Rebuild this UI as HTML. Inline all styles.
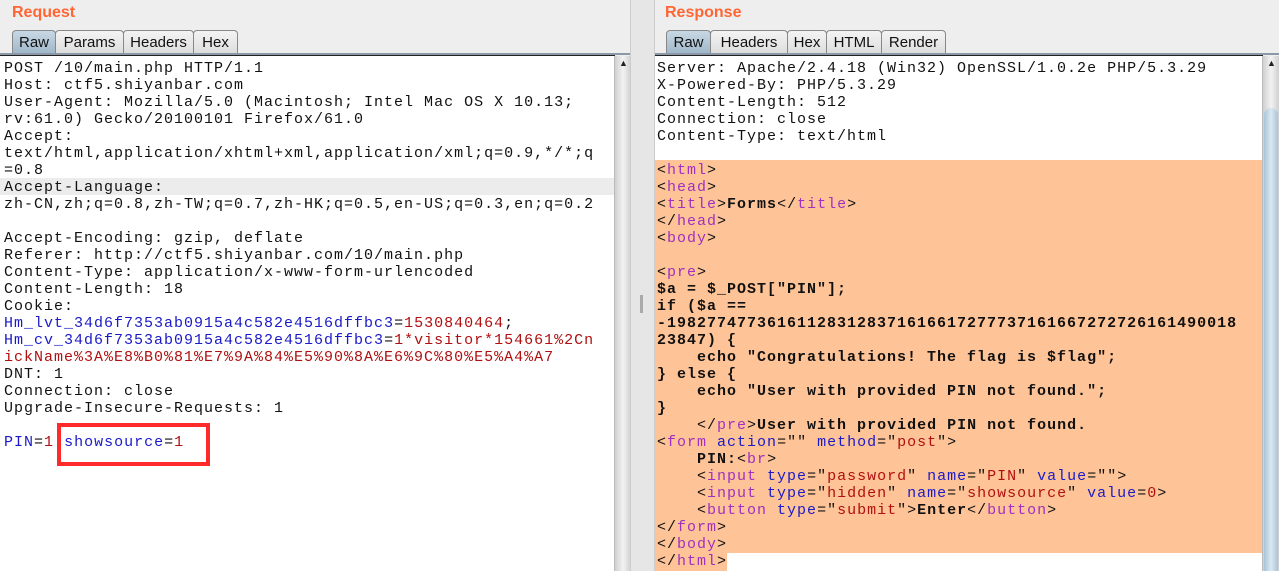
<!DOCTYPE html>
<html><head><meta charset="utf-8"><style>
*{margin:0;padding:0;box-sizing:border-box}
body{width:1279px;height:571px;background:#eeeeee;position:relative;overflow:hidden;font-family:"Liberation Sans",sans-serif}
.title{position:absolute;top:4px;font-size:16px;font-weight:bold;color:#ff6633}
.tabs{position:absolute;top:30px;height:24px;display:flex}
.tab{height:24px;border:1px solid #888;border-bottom:none;border-radius:4px 4px 0 0;background:linear-gradient(#f4f4f4,#dcdcdc);font-size:15px;padding:3px 0 0;text-align:center;color:#111;margin-right:-1px}
.tab.sel{background:linear-gradient(#c8d8e4,#9fb6c8)}
.line{position:absolute;top:53px;height:2px;background:#8a98a8}
.area{position:absolute;top:55px;height:516px;background:#fff;border-top:1px solid #222}
.sb{position:absolute;top:56px;width:17px;height:515px;background:linear-gradient(90deg,#d0d0d0,#f2f2f2,#d0d0d0);border-left:1px solid #bbb}
.sb:before{content:"▲";position:absolute;top:2px;left:4px;font-size:9px;color:#222}
pre{position:absolute;font-family:"Liberation Mono",monospace;font-size:15px;letter-spacing:1px;line-height:17px;color:#111;white-space:pre}
.b{color:#1a1ac8}.r{color:#b01010}.p{color:#a030c0}.k{font-weight:bold}
</style></head><body>
<div class="title" style="left:12px">Request</div>
<div class="tabs" style="left:12px"><div class="tab sel" style="width:44px">Raw</div><div class="tab" style="width:69px">Params</div><div class="tab" style="width:71px">Headers</div><div class="tab" style="width:45px">Hex</div></div>
<div class="line" style="left:0;width:630px"></div>
<div class="area" style="left:0;width:615px"></div>
<div style="position:absolute;left:0;top:178px;width:615px;height:17px;background:#ececec"></div>
<div class="sb" style="left:614px"></div>
<div style="position:absolute;left:630px;top:0;width:25px;height:571px;background:#e6e6e6;border-left:1px solid #ccc;border-right:1px solid #ccc"></div>
<div style="position:absolute;left:640px;top:295px;width:3px;height:18px;background:#aaa"></div>
<pre style="left:4px;top:60px">POST /10/main.php HTTP/1.1
Host: ctf5.shiyanbar.com
User-Agent: Mozilla/5.0 (Macintosh; Intel Mac OS X 10.13;
rv:61.0) Gecko/20100101 Firefox/61.0
Accept:
text/html,application/xhtml+xml,application/xml;q=0.9,*/*;q
=0.8
Accept-Language:
zh-CN,zh;q=0.8,zh-TW;q=0.7,zh-HK;q=0.5,en-US;q=0.3,en;q=0.2

Accept-Encoding: gzip, deflate
Referer: http://ctf5.shiyanbar.com/10/main.php
Content-Type: application/x-www-form-urlencoded
Content-Length: 18
Cookie:
<span class="b">Hm_lvt_34d6f7353ab0915a4c582e4516dffbc3</span>=<span class="r">1530840464</span>;
<span class="b">Hm_cv_34d6f7353ab0915a4c582e4516dffbc3</span>=<span class="r">1*visitor*154661%2Cn</span>
<span class="r">ickName%3A%E8%B0%81%E7%9A%84%E5%90%8A%E6%9C%80%E5%A4%A7</span>
DNT: 1
Connection: close
Upgrade-Insecure-Requests: 1

<span class="b">PIN</span>=<span class="r">1</span><span style="color:#fff">&amp;</span><span class="b">showsource</span>=<span class="r">1</span></pre>
<div style="position:absolute;left:57px;top:423px;width:153px;height:43px;border:4px solid #ff2a2a"></div>

<div class="title" style="left:665px">Response</div>
<div class="tabs" style="left:666px"><div class="tab sel" style="width:45px">Raw</div><div class="tab" style="width:78px">Headers</div><div class="tab" style="width:40px">Hex</div><div class="tab" style="width:56px">HTML</div><div class="tab" style="width:65px">Render</div></div>
<div class="line" style="left:655px;width:624px"></div>
<div class="area" style="left:655px;width:608px"></div>
<div style="position:absolute;left:655px;top:160px;width:607px;height:393px;background:#fec397"></div>
<div style="position:absolute;left:655px;top:553px;width:72px;height:18px;background:#fec397"></div>
<div class="sb" style="left:1262px"></div>
<div style="position:absolute;left:1264px;top:108px;width:14px;height:463px;border-radius:7px 7px 0 0;background:linear-gradient(90deg,#a9c4d8,#dbe9f3,#a9c4d8)"></div>
<pre style="left:657px;top:60px">Server: Apache/2.4.18 (Win32) OpenSSL/1.0.2e PHP/5.3.29
X-Powered-By: PHP/5.3.29
Content-Length: 512
Connection: close
Content-Type: text/html

&lt;<span class="p">html</span>&gt;
&lt;<span class="p">head</span>&gt;
&lt;<span class="p">title</span>&gt;<span class="k">Forms</span>&lt;/<span class="p">title</span>&gt;
&lt;/<span class="p">head</span>&gt;
&lt;<span class="p">body</span>&gt;

&lt;<span class="p">pre</span>&gt;
<span class="k">$a = $_POST["PIN"];
if ($a ==
-198277477361611283128371616617277737161667272726161490018
23847) {
    echo "Congratulations! The flag is $flag";
} else {
    echo "User with provided PIN not found.";
}</span>
    &lt;/<span class="p">pre</span>&gt;<span class="k">User with provided PIN not found.</span>
&lt;<span class="p">form</span> <span class="b">action</span>="" <span class="b">method</span>="<span class="r">post</span>"&gt;
    <span class="k">PIN:</span>&lt;<span class="p">br</span>&gt;
    &lt;<span class="p">input</span> <span class="b">type</span>="<span class="r">password</span>" <span class="b">name</span>="<span class="r">PIN</span>" <span class="b">value</span>=""&gt;
    &lt;<span class="p">input</span> <span class="b">type</span>="<span class="r">hidden</span>" <span class="b">name</span>="<span class="r">showsource</span>" <span class="b">value</span>=<span class="r">0</span>&gt;
    &lt;<span class="p">button</span> <span class="b">type</span>="<span class="r">submit</span>"&gt;<span class="k">Enter</span>&lt;/<span class="p">button</span>&gt;
&lt;/<span class="p">form</span>&gt;
&lt;/<span class="p">body</span>&gt;
&lt;/<span class="p">html</span>&gt;</pre>
</body></html>
